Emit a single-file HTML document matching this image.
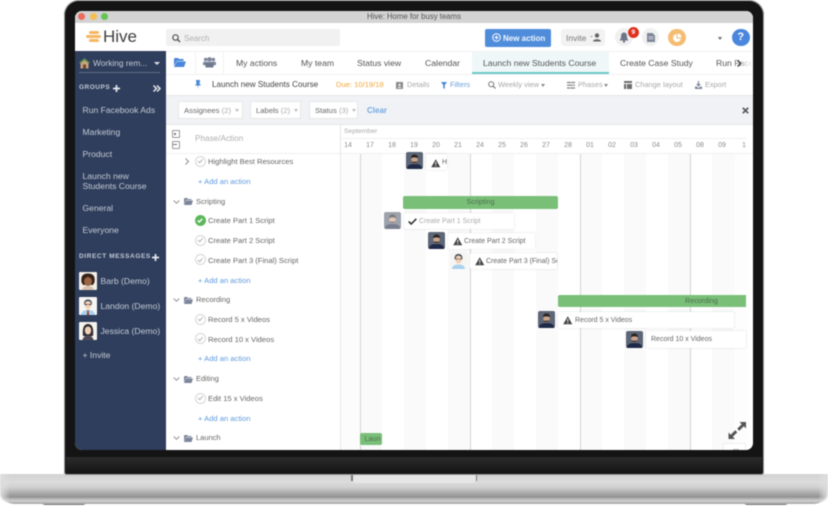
<!DOCTYPE html>
<html><head><meta charset="utf-8">
<style>
html,body{margin:0;padding:0;background:#fff;}
#root{position:relative;width:828px;height:506px;overflow:hidden;font-family:"Liberation Sans",Arial,sans-serif;filter:blur(.4px);}
.a{position:absolute;}
.t{position:absolute;white-space:nowrap;line-height:12px;height:12px;margin-top:-6px;}
.s{color:#c4cad6;font-size:8.6px;}
.tab{color:#555;font-size:8.65px;}
.g{color:#a8a8a8;font-size:7.4px;}
.r{color:#666;font-size:7.6px;}
.add{color:#5e9be0;font-size:7.6px;}
.p{color:#666;font-size:7.5px;}
.chip{position:absolute;top:101px;height:18px;background:#fff;border:1px solid #e6e6e6;box-sizing:border-box;border-radius:1px;color:#666;font-size:7.7px;line-height:17.5px;padding-left:5px;white-space:nowrap;}
.chip i{font-style:normal;color:#aaa;}
.chip b{display:inline-block;width:0;height:0;border:2.5px solid transparent;border-top:3px solid #bbb;border-bottom:0;margin-left:4px;vertical-align:1px;}
.card{position:absolute;background:#fff;border-radius:2px;box-shadow:0 0 2px rgba(0,0,0,.14);overflow:hidden;color:#666;font-size:7px;line-height:16.5px;white-space:nowrap;}
.card span{top:1px;}
.bar{position:absolute;background:#79bf78;border-radius:2px;color:#4f6d4f;font-size:7.2px;line-height:12.5px;text-align:center;overflow:hidden;white-space:nowrap;}
.col{position:absolute;top:153px;height:297px;width:22px;background:#fafafa;}
.vl{position:absolute;top:153px;height:297px;width:1px;background:#d4d4d4;}
.d{position:absolute;top:140px;width:22px;text-align:center;color:#8a8a8a;font-size:7px;line-height:12px;}
.ck{position:absolute;left:195px;width:9px;height:9px;border:1px solid #d6d6d6;border-radius:50%;background:#fff;margin-top:-6px;}
.ck:after{content:"";position:absolute;left:3px;top:1.5px;width:2px;height:3.5px;border:solid #b5b5b5;border-width:0 .8px .8px 0;transform:rotate(40deg);}
svg{position:absolute;overflow:visible;}
</style></head>
<body><div id="root">
<svg width="0" height="0" style="position:absolute">
<defs>
<symbol id="man" viewBox="0 0 17 17"><rect width="17" height="17" rx="2" fill="#5d6677"/><path d="M1 17c0-4 3-5 7.500-5s7.500 1 7.500 5z" fill="#1f2a48"/><ellipse cx="8.500" cy="7.500" rx="3.300" ry="4.300" fill="#c9a48c"/><path d="M5 6.500C5 3 7 2.500 8.500 2.500S12 3 12 6.500c-1-1.500-6-1.500-7 0z" fill="#2a2320"/><path d="M5.500 9c.6 3 5.400 3 6 0-1 1-5 1-6 0z" fill="#332a26"/></symbol>
<symbol id="warn" viewBox="0 0 10 9"><path d="M5 .3 9.800 8.700H.2z" fill="#444"/><rect x="4.500" y="3" width="1" height="3" fill="#fff"/><rect x="4.500" y="6.700" width="1" height="1" fill="#fff"/></symbol>
<symbol id="fold" viewBox="0 0 9 7"><path d="M0 1q0-1 1-1h2l1 1h3.500v1H2L0 6.500z" fill="#7c869b"/><path d="M2 2.500h7L7.500 7H0z" fill="#7c869b"/></symbol>
<symbol id="chev" viewBox="0 0 7 4"><path d="M.7.5 3.500 3.300 6.300.5" fill="none" stroke="#888" stroke-width=".9"/></symbol>
</defs>
</svg>

<!-- base -->
<div class="a" style="left:42px;top:502px;width:44px;height:3px;background:#777;border-radius:0 0 3px 3px"></div>
<div class="a" style="left:744px;top:502px;width:44px;height:3px;background:#777;border-radius:0 0 3px 3px"></div>
<div class="a" style="left:0;top:474px;width:828px;height:29.500px;border-radius:1px 1px 14px 14px;background:linear-gradient(#d2d2d2 0,#dcdcdc 8px,#d2d2d2 13px,#ababab 19px,#939393 23px,#b8b8b8 25px,#cfcfcf 27px,#aaa 29.500px)"></div>
<div class="a" style="left:0;top:474px;width:9px;height:29px;border-radius:1px 0 0 14px;background:linear-gradient(90deg,#dedede,rgba(225,225,225,.1))"></div>
<div class="a" style="right:0;top:474px;width:9px;height:29px;border-radius:0 1px 14px 0;background:linear-gradient(270deg,#dedede,rgba(225,225,225,.1))"></div>
<div class="a" style="left:352px;top:474px;width:124px;height:9px;background:#e6e6e6;border-radius:0 0 4px 4px"></div>
<div class="a" style="left:351px;top:474px;width:1.500px;height:7px;background:#7a7a7a"></div>
<div class="a" style="left:475.500px;top:474px;width:1.500px;height:7px;background:#7a7a7a"></div>

<!-- lid -->
<div class="a" style="left:64px;top:0;width:700px;height:474.500px;background:#141414;border-radius:15px 15px 3px 3px;box-shadow:0 0 0 1px #9a9a9a inset"></div>
<div class="a" style="left:66px;top:457px;width:696px;height:17px;background:linear-gradient(#2b2b2b,#141414);border-radius:0 0 2px 2px"></div>

<!-- screen -->
<div class="a" id="scr" style="left:75px;top:11px;width:678px;height:439px;background:#fff;border-radius:7px;overflow:hidden">
 <div class="a" style="left:0;top:0;width:678px;height:12px;background:#d3d3d3"></div>
 <div class="a" style="left:0;top:40px;width:91px;height:399px;background:#2f3e5c"></div>
</div>

<div class="a" style="left:78px;top:13px;width:7px;height:7px;border-radius:50%;background:#ed6a5e"></div>
<div class="a" style="left:89.500px;top:13px;width:7px;height:7px;border-radius:50%;background:#f5bf4f"></div>
<div class="a" style="left:101px;top:13px;width:7px;height:7px;border-radius:50%;background:#62c554"></div>
<div class="t" style="left:367px;top:17px;font-size:7.800px;color:#555">Hive: Home for busy teams</div>

<!-- header -->
<svg style="left:86px;top:30px" width="16" height="14"><rect x="3" y="1" width="10" height="3" rx="1.500" fill="#f5b763"/><rect x="0" y="5" width="15" height="3" rx="1.500" fill="#f5b763"/><rect x="3" y="9" width="10" height="3" rx="1.500" fill="#f5b763"/></svg>
<div class="t" style="left:103px;top:37px;font-size:17px;color:#3f3f3f;line-height:24px;height:24px;margin-top:-12px">Hive</div>
<div class="a" style="left:166px;top:29px;width:174px;height:17px;background:#f1f1f1;border-radius:2px"></div>
<svg style="left:172px;top:33.500px" width="9" height="9"><circle cx="3.500" cy="3.500" r="2.700" fill="none" stroke="#555" stroke-width="1.200"/><path d="M5.500 5.500 8 8" stroke="#555" stroke-width="1.400"/></svg>
<div class="t" style="left:184px;top:38.500px;font-size:8px;color:#b0b0b0">Search</div>
<div class="a" style="left:485px;top:28.500px;width:66px;height:18px;background:#4f8ddb;border-radius:2px"></div>
<svg style="left:491.500px;top:33px" width="9" height="9"><circle cx="4.500" cy="4.500" r="3.800" fill="none" stroke="#fff" stroke-width="1"/><path d="M4.500 2.500v4M2.500 4.500h4" stroke="#fff" stroke-width="1"/></svg>
<div class="t" style="left:503px;top:38.500px;font-size:8px;color:#fff;font-weight:bold;opacity:.92">New action</div>
<div class="a" style="left:561px;top:29px;width:44px;height:17px;background:#f2f2f2;border-radius:3px"></div>
<div class="t" style="left:566px;top:38px;font-size:8.500px;color:#777">Invite</div>
<svg style="left:590px;top:33px" width="12" height="9"><circle cx="7" cy="2.500" r="2.200" fill="#666"/><path d="M3 8.500c0-3 8-3 8 0z" fill="#666"/><path d="M.5 3.500h2" stroke="#888" stroke-width=".8"/></svg>
<div class="a" style="left:615px;top:28px;width:18px;height:18px;border-radius:50%;background:#f0f0f0"></div>
<svg style="left:619px;top:31.500px" width="10" height="11"><path d="M5 .5C2.800.5 2 2.500 2 4.500 2 7 1 7.500.5 8.500h9C9 7.500 8 7 8 4.500 8 2.500 7.200.5 5 .5z" fill="#6d7688"/><circle cx="5" cy="9.500" r="1.200" fill="#6d7688"/></svg>
<div class="a" style="left:627.500px;top:26.500px;width:11.500px;height:11.500px;border-radius:50%;background:#e0301e;color:#fff;font-size:6.500px;font-weight:bold;line-height:11.500px;text-align:center">9</div>
<div class="a" style="left:642px;top:28px;width:17px;height:18px;border-radius:50%;background:#f0f0f0"></div>
<svg style="left:647px;top:32.500px" width="8" height="9"><path d="M0 0h5.500L8 2.500V9H0z" fill="#7e8697"/><path d="M1.500 4h5M1.500 5.800h5" stroke="#f0f0f0" stroke-width=".7"/></svg>
<div class="a" style="left:668px;top:28.500px;width:17.500px;height:17.500px;border-radius:50%;background:#f5bd72"></div>
<svg style="left:672px;top:32.500px" width="10" height="10"><path d="M4.500 1a4 4 0 1 0 4.500 4.500H4.500z" fill="#fff"/><path d="M5.500 .5v4h4a4 4 0 0 0-4-4z" fill="#fff"/></svg>
<div class="a" style="left:717.500px;top:37px;border:2.500px solid transparent;border-top:3px solid #666;border-bottom:0"></div>
<div class="a" style="left:732px;top:28.500px;width:17.500px;height:17.500px;border-radius:50%;background:#4a87dc;color:#fff;font-size:11px;font-weight:bold;line-height:17.500px;text-align:center">?</div>

<!-- sidebar -->
<svg style="left:79px;top:58px" width="11" height="11"><path d="M5.500 .5 0 5h1.500v5.500h8V5H11z" fill="#c9a27c"/><path d="M5.500 0 0 4.500 1 5.500 5.500 2 10 5.500 11 4.500z" fill="#4f8a4b"/><rect x="4" y="6.500" width="3" height="4" fill="#6d4b35"/></svg>
<div class="t s" style="left:93px;top:63px;font-size:8.400px">Working rem...</div>
<div class="a" style="left:154px;top:61.500px;border:3px solid transparent;border-top:3.500px solid #dfe3ea;border-bottom:0"></div>
<div class="a" style="left:79px;top:71.500px;width:81px;height:1px;background:#5f6d86"></div>
<div class="t" style="left:79px;top:88px;font-size:6.500px;font-weight:bold;letter-spacing:.5px;color:#c4cad6">GROUPS</div>
<svg style="left:112.500px;top:84.500px" width="7" height="7"><path d="M3.500 0v7M0 3.500h7" stroke="#e6e9ef" stroke-width="1.700"/></svg>
<svg style="left:153px;top:84.500px" width="8" height="7"><path d="M.5.500 3.500 3.500.5 6.500M4 .5 7 3.500 4 6.500" fill="none" stroke="#e6e9ef" stroke-width="1.500"/></svg>
<div class="t s" style="left:82.500px;top:109.500px">Run Facebook Ads</div>
<div class="t s" style="left:82.500px;top:131.500px">Marketing</div>
<div class="t s" style="left:82.500px;top:153.500px">Product</div>
<div class="t s" style="left:82.500px;top:175.500px">Launch new</div>
<div class="t s" style="left:82.500px;top:186px">Students Course</div>
<div class="t s" style="left:82.500px;top:208px">General</div>
<div class="t s" style="left:82.500px;top:230px">Everyone</div>
<div class="t" style="left:79px;top:257px;font-size:6.500px;font-weight:bold;letter-spacing:.6px;color:#c4cad6">DIRECT MESSAGES</div>
<svg style="left:151.500px;top:253.500px" width="7" height="7"><path d="M3.500 0v7M0 3.500h7" stroke="#e6e9ef" stroke-width="1.700"/></svg>

<svg style="left:79px;top:272px" width="18" height="18"><rect width="18" height="18" rx="1" fill="#f4efe8"/><path d="M2.500 10C1.500 3 5 1.500 9 1.500S16.500 3 15.500 10c-.5 2-2 3-2 3h-9s-1.500-1-2-3z" fill="#34231a"/><ellipse cx="9" cy="9.500" rx="4" ry="4.500" fill="#9a6543"/><path d="M3 18c.5-3 3-4 6-4s5.500 1 6 4z" fill="#d9c3ae"/></svg>
<div class="t s" style="left:100.500px;top:281px">Barb (Demo)</div>
<svg style="left:79px;top:297px" width="18" height="18"><rect width="18" height="18" rx="1" fill="#f7f5f2"/><path d="M5 7C5 3.500 7 2.500 9 2.500S13 3.500 13 7z" fill="#3d4a55"/><ellipse cx="9" cy="8" rx="3.300" ry="4" fill="#f0cfb4"/><path d="M5.500 7.500h3M9.500 7.500h3" stroke="#444" stroke-width=".9"/><path d="M2 18c.5-4 3-5 7-5s6.500 1 7 5z" fill="#a9d2ee"/><path d="M8.300 13h1.400l.5 5H7.800z" fill="#9c4a3c"/></svg>
<div class="t s" style="left:100.500px;top:306px">Landon (Demo)</div>
<svg style="left:79px;top:322px" width="18" height="18"><rect width="18" height="18" rx="1" fill="#f6f2ee"/><path d="M4 14C3 5 5.500 2 9 2s6 3 5 12z" fill="#2f2c30"/><ellipse cx="9" cy="8.500" rx="3.200" ry="4" fill="#f0cfb8"/><path d="M3.500 18c.5-3 3-4.500 5.500-4.500s5 1.500 5.500 4.500z" fill="#4d4a58"/></svg>
<div class="t s" style="left:100.500px;top:331px">Jessica (Demo)</div>
<div class="t s" style="left:82.500px;top:355px">+ Invite</div>

<!-- tab row -->
<div class="a" style="left:166px;top:51px;width:587px;height:1px;background:#f2f2f2"></div>
<div class="a" style="left:195px;top:52px;width:1px;height:22px;background:#f2f2f2"></div>
<div class="a" style="left:223px;top:52px;width:1px;height:22px;background:#f2f2f2"></div>
<svg style="left:174px;top:57.500px" width="12" height="9"><path d="M0 1q0-1 1-1h3l1 1h4.500v2H3L0 8z" fill="#4a87dc"/><path d="M3 3.500h9L10 9H0z" fill="#4a87dc"/></svg>
<svg style="left:203px;top:56.500px" width="13" height="11"><circle cx="2.700" cy="2.500" r="1.800" fill="#7c869b"/><circle cx="10.300" cy="2.500" r="1.800" fill="#7c869b"/><circle cx="6.500" cy="2.300" r="2.200" fill="#7c869b"/><rect x="0" y="4.800" width="13" height="3.500" rx="1" fill="#7c869b"/><path d="M2.500 6h8v4.500h-8z" fill="#6f798e"/></svg>
<div class="t tab" style="left:236px;top:63px">My actions</div>
<div class="t tab" style="left:301px;top:63px">My team</div>
<div class="t tab" style="left:357px;top:63px">Status view</div>
<div class="t tab" style="left:425px;top:63px">Calendar</div>
<div class="a" style="left:472px;top:52px;width:137px;height:22px;background:#eff7f8;border-bottom:2px solid #6cc8c8;box-sizing:border-box"></div>
<div class="t tab" style="left:483px;top:63px">Launch new Students Course</div>
<div class="t tab" style="left:620px;top:63px">Create Case Study</div>
<div class="t tab" style="left:716px;top:63px;width:37px;overflow:hidden">Run Facebook</div>
<div class="a" style="left:733px;top:52px;width:20px;height:22px;background:linear-gradient(90deg,rgba(255,255,255,0),#fff)"></div>
<svg style="left:737px;top:59.500px" width="5" height="7"><path d="M.7.500 3.700 3.500.7 6.500" fill="none" stroke="#333" stroke-width="1.300"/></svg>

<!-- row 2 -->
<div class="a" style="left:166px;top:74px;width:587px;height:1px;background:#f2f2f2"></div>
<svg style="left:195px;top:80px" width="6" height="9"><path d="M1 0h4v1L4.500 3.500 6 5.500H3.400L3 9 2.600 5.500H0L1.500 3.500 1 1z" fill="#4a87dc"/></svg>
<div class="t" style="left:212px;top:85px;font-size:8.100px;color:#444">Launch new Students Course</div>
<div class="t" style="left:336px;top:85px;font-size:7.600px;color:#f2a73b">Due: 10/19/18</div>
<svg style="left:396px;top:81.500px" width="7" height="7"><rect width="7" height="7" rx=".5" fill="#8a8a8a"/><circle cx="3.500" cy="3" r="1.200" fill="#eee"/><path d="M1.500 6c.3-1.500 3.700-1.500 4 0z" fill="#eee"/></svg>
<div class="t g" style="left:407px;top:85px">Details</div>
<svg style="left:441px;top:81.500px" width="6" height="7"><path d="M0 0h6L3.800 3V7L2.200 6V3z" fill="#4a87dc"/></svg>
<div class="t g" style="left:450px;top:85px;color:#6c9fdb">Filters</div>
<svg style="left:488px;top:81px" width="8" height="8"><circle cx="3.200" cy="3.200" r="2.500" fill="none" stroke="#777" stroke-width="1"/><path d="M5 5 7.500 7.500" stroke="#777" stroke-width="1.200"/></svg>
<div class="t g" style="left:498px;top:85px">Weekly view</div>
<div class="a" style="left:541px;top:84px;border:2.500px solid transparent;border-top:3px solid #888;border-bottom:0"></div>
<svg style="left:567px;top:81.500px" width="8" height="6.500"><path d="M0 .5h8M0 3.200h8M0 6h8" stroke="#7f7f7f" stroke-width="1.200"/><path d="M4 0v1M6 2.700v1M3 5.500v1" stroke="#eee" stroke-width=".6"/></svg>
<div class="t g" style="left:578px;top:85px">Phases</div>
<div class="a" style="left:604px;top:84px;border:2.500px solid transparent;border-top:3px solid #888;border-bottom:0"></div>
<svg style="left:624px;top:81px" width="8" height="8"><rect width="8" height="2" fill="#6f6f6f"/><rect y="3" width="2.200" height="5" fill="#6f6f6f"/><rect x="3" y="3" width="5" height="5" fill="#6f6f6f"/></svg>
<div class="t g" style="left:635px;top:85px">Change layout</div>
<svg style="left:695px;top:81px" width="7" height="8"><path d="M3.500 0v4.500M1.800 3 3.500 5 5.200 3" fill="none" stroke="#7d8799" stroke-width="1.200"/><path d="M0 5.500h1.500L3.500 7l2-1.500H7V8H0z" fill="#7d8799"/></svg>
<div class="t g" style="left:705px;top:85px">Export</div>

<!-- filter row -->
<div class="a" style="left:166px;top:95px;width:587px;height:30px;background:#f0f2f5;border-top:1px solid #e6e6e6;border-bottom:1px solid #e6e6e6;box-sizing:border-box"></div>
<div class="chip" style="left:178px;width:65px">Assignees <i>(2)</i><b></b></div>
<div class="chip" style="left:250px;width:51px">Labels <i>(2)</i><b></b></div>
<div class="chip" style="left:309px;width:49px">Status <i>(3)</i><b></b></div>
<div class="t" style="left:367px;top:111px;font-size:8px;color:#5e9be0;font-weight:bold;opacity:.85">Clear</div>
<svg style="left:742px;top:107px" width="7" height="7"><path d="M.8.800l5.400 5.400M6.200.8.800 6.200" stroke="#555" stroke-width="1.700"/></svg>

<!-- gantt columns -->
<div class="col" style="left:359.500px"></div><div class="col" style="left:403.500px"></div><div class="col" style="left:447.500px"></div><div class="col" style="left:491.500px"></div><div class="col" style="left:535.500px"></div><div class="col" style="left:579.500px"></div><div class="col" style="left:623.500px"></div><div class="col" style="left:667.500px"></div><div class="col" style="left:711.500px"></div>
<div class="a" style="left:340px;top:153px;width:19.500px;height:297px;background:#fcfcfc"></div>
<div class="a" style="left:733.500px;top:153px;width:13px;height:297px;background:#fdfdfd"></div>
<div class="vl" style="left:359.500px"></div><div class="vl" style="left:469.500px"></div><div class="vl" style="left:580px"></div><div class="vl" style="left:690px"></div>

<!-- table head -->
<div class="a" style="left:166px;top:125px;width:587px;height:28px;background:#fff"></div>
<div class="a" style="left:166px;top:153px;width:587px;height:1px;background:#efefef"></div>
<div class="a" style="left:340px;top:125px;width:1px;height:325px;background:#e6e6e6"></div>
<div class="a" style="left:171.500px;top:130px;width:6px;height:6px;border:1px solid #999;border-radius:1px;background:#fff"></div>
<div class="a" style="left:174px;top:132.500px;width:2px;height:2px;background:#777"></div>
<div class="a" style="left:171.500px;top:141px;width:6px;height:6px;border:1px solid #999;border-radius:1px;background:#fff"></div>
<div class="a" style="left:173px;top:144px;width:4px;height:1px;background:#777"></div>
<div class="t" style="left:195px;top:139px;font-size:8.200px;color:#aeaeae">Phase/Action</div>
<div class="t" style="left:344px;top:132px;font-size:6.800px;color:#aaa">September</div>
<div class="a" style="left:341px;top:138px;width:405px;height:1px;background:#f0f0f0"></div>
<div class="d" style="left:337px">14</div><div class="d" style="left:359px">17</div><div class="d" style="left:381px">18</div><div class="d" style="left:403px">19</div><div class="d" style="left:425px">20</div><div class="d" style="left:447px">21</div><div class="d" style="left:469px">24</div><div class="d" style="left:491px">25</div><div class="d" style="left:513px">26</div><div class="d" style="left:535px">27</div><div class="d" style="left:557px">28</div><div class="d" style="left:579px">01</div><div class="d" style="left:601px">02</div><div class="d" style="left:623px">03</div><div class="d" style="left:645px">04</div><div class="d" style="left:667px">05</div><div class="d" style="left:689px">08</div><div class="d" style="left:711px">09</div>
<div class="d" style="left:733px;width:13px;text-align:right;overflow:hidden">1</div>

<!-- left rows -->
<svg style="left:185px;top:158px" width="4" height="7"><path d="M.5.500 3.500 3.500.5 6.500" fill="none" stroke="#888" stroke-width=".9"/></svg>
<div class="ck" style="top:161.500px"></div><div class="t r" style="left:208px;top:161.500px">Highlight Best Resources</div>
<div class="t add" style="left:198px;top:181.500px">+ Add an action</div>
<svg style="left:173px;top:199.500px" width="7" height="4"><use href="#chev"/></svg><svg style="left:184px;top:198px" width="9" height="7"><use href="#fold"/></svg><div class="t p" style="left:196px;top:201.500px">Scripting</div>
<div class="a" style="left:194.500px;top:215px;width:11px;height:11px;border-radius:50%;background:#5cb85c"></div>
<svg style="left:197px;top:218px" width="6" height="5"><path d="M.7 2.500 2.300 4 5.300.8" fill="none" stroke="#fff" stroke-width="1.400"/></svg>
<div class="t r" style="left:208px;top:221px">Create Part 1 Script</div>
<div class="ck" style="top:240.500px"></div><div class="t r" style="left:208px;top:240.500px">Create Part 2 Script</div>
<div class="ck" style="top:260px"></div><div class="t r" style="left:208px;top:260.500px">Create Part 3 (Final) Script</div>
<div class="t add" style="left:198px;top:280.500px">+ Add an action</div>
<svg style="left:173px;top:298px" width="7" height="4"><use href="#chev"/></svg><svg style="left:184px;top:296.500px" width="9" height="7"><use href="#fold"/></svg><div class="t p" style="left:196px;top:300px">Recording</div>
<div class="ck" style="top:319.500px"></div><div class="t r" style="left:208px;top:319.500px">Record 5 x Videos</div>
<div class="ck" style="top:339px"></div><div class="t r" style="left:208px;top:339.500px">Record 10 x Videos</div>
<div class="t add" style="left:198px;top:359px">+ Add an action</div>
<svg style="left:173px;top:377px" width="7" height="4"><use href="#chev"/></svg><svg style="left:184px;top:375.500px" width="9" height="7"><use href="#fold"/></svg><div class="t p" style="left:196px;top:379px">Editing</div>
<div class="ck" style="top:398.500px"></div><div class="t r" style="left:208px;top:398.500px">Edit 15 x Videos</div>
<div class="t add" style="left:198px;top:418.500px">+ Add an action</div>
<svg style="left:173px;top:436px" width="7" height="4"><use href="#chev"/></svg><svg style="left:184px;top:434.500px" width="9" height="7"><use href="#fold"/></svg><div class="t p" style="left:196px;top:438px">Launch</div>

<!-- gantt items -->
<svg style="left:406px;top:154px" width="17" height="15"><use href="#man" width="17" height="17" y="-2"/></svg>
<div class="card" style="left:426px;top:154px;width:21px;height:16px"><span style="position:absolute;left:16px">H</span></div>
<svg style="left:430.500px;top:158.500px" width="9.500" height="8.500"><use href="#warn"/></svg>

<div class="bar" style="left:403px;top:196px;width:155px;height:12.700px">Scripting</div>
<svg style="left:383.500px;top:212px;opacity:.6" width="17" height="17"><use href="#man"/></svg>
<div class="card" style="left:403.500px;top:212.700px;width:110px;height:16.300px;color:#aaa"><span style="position:absolute;left:15.500px">Create Part 1 Script</span></div>
<svg style="left:408px;top:218px" width="9" height="7"><path d="M.7 3.500 3.200 6 8.300.8" fill="none" stroke="#333" stroke-width="1.600"/></svg>
<svg style="left:428px;top:232px" width="17" height="17"><use href="#man"/></svg>
<div class="card" style="left:448px;top:232.500px;width:87px;height:16.500px"><span style="position:absolute;left:16px">Create Part 2 Script</span></div>
<svg style="left:452.500px;top:237px" width="9.500" height="8.500"><use href="#warn"/></svg>
<svg style="left:450px;top:252px" width="17" height="17"><rect width="17" height="17" rx="1" fill="#f7f5f2"/><path d="M4.500 7C4.500 3 6.500 2 8.500 2S12.500 3 12.500 7z" fill="#3d4a55"/><ellipse cx="8.500" cy="7.500" rx="3.200" ry="4" fill="#f0cfb4"/><path d="M5 7h3M9 7h3" stroke="#444" stroke-width=".8"/><path d="M2 17c.5-3.500 3-4.500 6.500-4.500S14.500 13.500 15 17z" fill="#a9d2ee"/></svg>
<div class="card" style="left:470px;top:252.500px;width:87px;height:16.500px"><span style="position:absolute;left:16px">Create Part 3 (Final) Script</span></div>
<svg style="left:474.500px;top:257px" width="9.500" height="8.500"><use href="#warn"/></svg>

<div class="bar" style="left:558px;top:294.700px;width:188px;height:12.600px;border-radius:2px 0 0 2px;text-align:left"><span style="position:absolute;left:127px">Recording</span></div>
<svg style="left:538px;top:310.700px" width="17" height="17"><use href="#man"/></svg>
<div class="card" style="left:558px;top:311.500px;width:176px;height:16.500px"><span style="position:absolute;left:17px">Record 5 x Videos</span></div>
<svg style="left:562.500px;top:316px" width="9.500" height="8.500"><use href="#warn"/></svg>
<svg style="left:626px;top:330.500px" width="17" height="17"><use href="#man"/></svg>
<div class="card" style="left:646px;top:331.300px;width:100px;height:16.700px;border-radius:2px 0 0 2px"><span style="position:absolute;left:5px">Record 10 x Videos</span></div>

<div class="bar" style="left:359.500px;top:432.700px;width:22px;height:12.600px;text-align:left;padding-left:5px;box-sizing:border-box">Laun</div>

<svg style="left:728px;top:421px" width="19" height="19"><path d="M11.500 1H18V7.500L15.800 5.300 11.300 9.800 9.200 7.700 13.700 3.200z" fill="#555"/><path d="M7 18H.5V11.500L2.700 13.700 7.200 9.200 9.300 11.300 4.800 15.800z" fill="#555"/></svg>
<div class="a" style="left:723px;top:443px;width:23px;height:7px;background:#fff;border:1px solid #efefef;border-bottom:0;box-sizing:border-box"></div>
<div class="a" style="left:733px;top:449px;width:6px;height:1px;background:#bbb"></div>
</div></body></html>
